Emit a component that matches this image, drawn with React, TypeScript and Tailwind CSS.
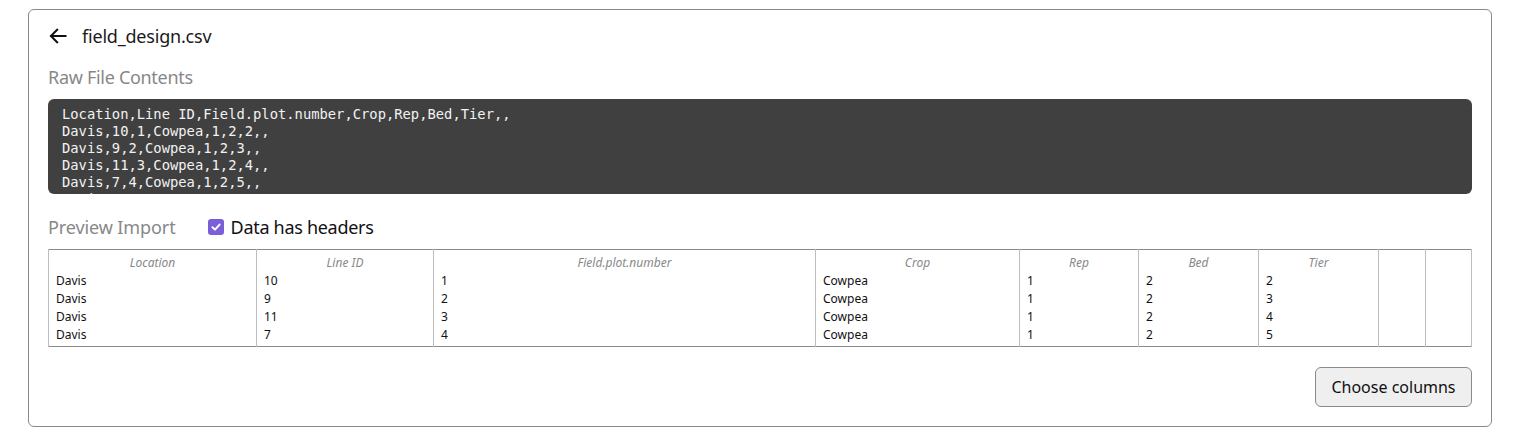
import React, { useState } from "react";

const RAW = [
  "Location,Line ID,Field.plot.number,Crop,Rep,Bed,Tier,,",
  "Davis,10,1,Cowpea,1,2,2,,",
  "Davis,9,2,Cowpea,1,2,3,,",
  "Davis,11,3,Cowpea,1,2,4,,",
  "Davis,7,4,Cowpea,1,2,5,,",
  "Davis,8,5,Cowpea,1,2,6,,",
];

const columns = [
  { name: "Location", w: "w-[208px]" },
  { name: "Line ID", w: "w-[177px]" },
  { name: "Field.plot.number", w: "w-[382px]" },
  { name: "Crop", w: "w-[204px]" },
  { name: "Rep", w: "w-[119px]" },
  { name: "Bed", w: "w-[120px]" },
  { name: "Tier", w: "w-[120px]" },
  { name: "", w: "w-[47px]" },
  { name: "", w: "w-[46px]" },
];

const rows = [
  ["Davis", "10", "1", "Cowpea", "1", "2", "2", "", ""],
  ["Davis", "9", "2", "Cowpea", "1", "2", "3", "", ""],
  ["Davis", "11", "3", "Cowpea", "1", "2", "4", "", ""],
  ["Davis", "7", "4", "Cowpea", "1", "2", "5", "", ""],
];

const App = () => {
  const [hasHeaders, setHasHeaders] = useState(true);

  return (
    <div className="min-h-screen bg-white px-[28px] pt-[9px] font-['Noto_Sans',sans-serif]">
      <div className="w-[1464px] rounded-[6px] border border-[#8a8a8a] px-[19px] pt-[12px] pb-[19px]">
        <div className="flex items-center gap-[14px] h-[28px]">
          <svg width="20" height="20" viewBox="0 0 24 24" fill="none" stroke="#111" strokeWidth="2.4" strokeLinecap="square">
            <path d="M21 12H4" />
            <path d="M11 4.5L3.5 12L11 19.5" />
          </svg>
          <span className="text-[18px] text-[#1a1a1a] tracking-[-0.2px]">field_design.csv</span>
        </div>

        <div className="mt-[14px] text-[18px] text-[#888] tracking-[-0.3px] leading-[26px]">Raw File Contents</div>

        <div className="mt-[9px] h-[95px] overflow-hidden rounded-[6px] bg-[#404040] px-[14px] pt-[7px] font-['DejaVu_Sans_Mono',monospace] text-[13.8px] leading-[17px] text-[#f2f2f2]">
          {RAW.map((l, i) => (
            <div key={i} className="whitespace-pre">{l}</div>
          ))}
        </div>

        <div className="mt-[20px] flex items-center h-[26px]">
          <span className="text-[18px] text-[#888] tracking-[-0.1px]">Preview Import</span>
          <label className="ml-[32px] flex items-center gap-[7px] cursor-pointer">
            <span
              onClick={() => setHasHeaders(!hasHeaders)}
              className={`flex h-[16px] w-[16px] items-center justify-center rounded-[3px] ${hasHeaders ? "bg-[#7b5fd9]" : "border border-[#888] bg-white"}`}
            >
              {hasHeaders && (
                <svg width="12" height="12" viewBox="0 0 12 12" fill="none" stroke="white" strokeWidth="2" strokeLinecap="round" strokeLinejoin="round">
                  <path d="M2.5 6.2L5 8.6L9.6 3.6" />
                </svg>
              )}
            </span>
            <span className="text-[18px] text-[#111] tracking-[-0.3px]">Data has headers</span>
          </label>
        </div>

        <table className="mt-[9px] w-[1424px] table-fixed border-collapse border border-[#8a8a8a] text-[12px]">
          <colgroup>
            {columns.map((c, i) => (
              <col key={i} className={c.w} />
            ))}
          </colgroup>
          <thead>
            <tr>
              {columns.map((c, i) => (
                <th key={i} className="border-x border-[#bdbdbd] pt-[4px] h-[22px] text-center font-normal italic text-[#888] leading-[18px]">
                  {c.name}
                </th>
              ))}
            </tr>
          </thead>
          <tbody>
            {rows.map((r, ri) => (
              <tr key={ri}>
                {r.map((v, ci) => (
                  <td
                    key={ci}
                    className={`border-x border-[#bdbdbd] px-[7px] leading-[18px] text-[#111] align-top ${ri === rows.length - 1 ? "h-[20px]" : "h-[18px]"}`}
                  >
                    {v}
                  </td>
                ))}
              </tr>
            ))}
          </tbody>
        </table>

        <div className="mt-[20px] flex justify-end">
          <button className="h-[40px] w-[157px] rounded-[6px] border border-[#8a8a8a] bg-[#efefef] text-[16px] text-[#111]">
            Choose columns
          </button>
        </div>
      </div>
    </div>
  );
};

export default App;
